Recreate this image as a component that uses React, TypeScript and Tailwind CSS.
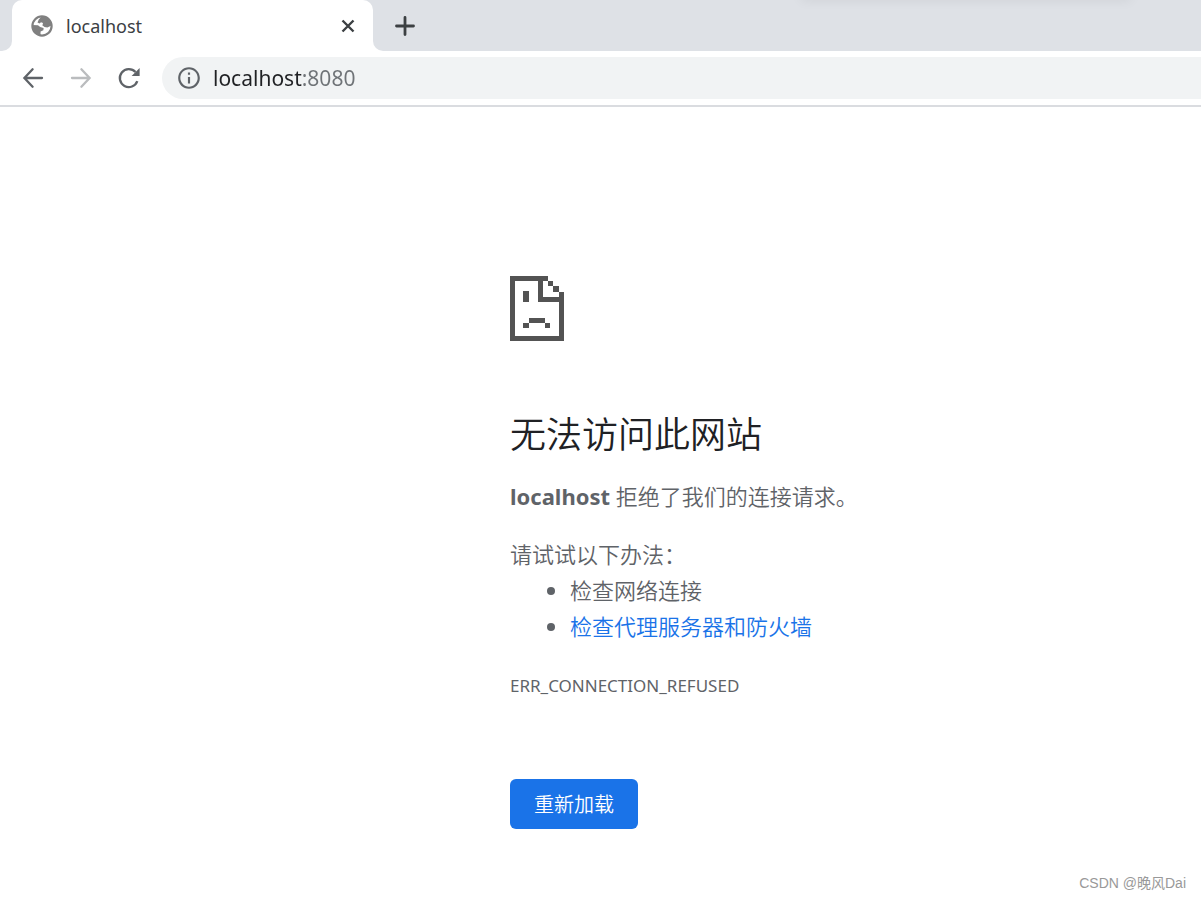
import React, { useState } from 'react';
import { MdInfoOutline } from 'react-icons/md';

const GlobeIcon = () => (
  <svg viewBox="0 0 24 24" className="size-6 shrink-0" aria-hidden="true">
    <circle cx="12" cy="12" r="9.6" fill="none" stroke="#808080" strokeWidth="2.2" />
    <path d="M12 2 8.8 5.6 7.5 8.6 9.5 9.4 11 8.2 13 9 12.4 11.6 14.6 13 17.4 13.6 21.5 11.5A10 10 0 0 0 12 2Z" fill="#808080" />
    <path d="M2.2 11 8 11.2 10.2 13 13.6 14 13.4 16.2 10.6 17.4 10.4 21.6A10 10 0 0 1 2.2 11Z" fill="#808080" />
  </svg>
);

const ArrowLeftIcon = () => (
  <svg viewBox="0 0 30 30" className="size-[30px]" fill="none" stroke="currentColor" strokeWidth="2.3" aria-hidden="true">
    <path d="M24 15H7M14.6 6.3 6.4 15 14.6 23.7" strokeLinecap="round" />
  </svg>
);

const ArrowRightIcon = () => (
  <svg viewBox="0 0 30 30" className="size-[30px]" fill="none" stroke="currentColor" strokeWidth="2.3" aria-hidden="true">
    <path d="M6 15H23M15.4 6.3 23.6 15 15.4 23.7" strokeLinecap="round" />
  </svg>
);

const ReloadIcon = () => (
  <svg viewBox="0 0 30 30" className="size-[30px]" aria-hidden="true">
    <path d="M23.3 18.2A9 9 0 1 1 21.5 9" fill="none" stroke="currentColor" strokeWidth="2.3" />
    <path d="M25.6 5V13H17.6Z" fill="currentColor" />
  </svg>
);

const CloseIcon = () => (
  <svg viewBox="0 0 24 24" className="size-6" aria-hidden="true">
    <path d="M6.5 6.5 17.5 17.5M17.5 6.5 6.5 17.5" stroke="currentColor" strokeWidth="2.4" />
  </svg>
);

const PlusIcon = () => (
  <svg viewBox="0 0 28 28" className="size-7" aria-hidden="true">
    <path d="M14 5.5V22.5M5.5 14H22.5" stroke="currentColor" strokeWidth="2.8" strokeLinecap="round" />
  </svg>
);

const SadPageIcon = () => (
  <svg width="54" height="65" viewBox="0 0 54 65" fill="#535353" shapeRendering="crispEdges" aria-hidden="true">
    {/* page outline */}
    <path d="M0 0H38V5H5V60H49V16H54V65H0Z" />
    {/* folded corner */}
    <path d="M28 0H33V21H54V26H28Z" />
    <path d="M38 5H43V10H38ZM43 10H49V16H43Z" />
    {/* eye and mouth */}
    <path d="M13 15H19V26H13ZM19 42H35V47H19ZM13 47H19V52H13ZM35 47H40V52H35Z" />
  </svg>
);

const TabStrip = () => (
  <div className="relative flex h-[51px] overflow-hidden bg-[#dee1e6]">
    <div className="w-3 bg-white">
      <div className="h-full rounded-br-[10px] bg-[#dee1e6]" />
    </div>
    <div className="bg-[#dee1e6]">
      <div className="flex h-full w-[361px] items-center rounded-t-[10px] bg-white pr-[13px] pl-[18px]">
        <GlobeIcon />
        <span className="ml-3 flex-1 text-lg text-[#3c4043]">localhost</span>
        <button type="button" aria-label="关闭标签页" className="text-[#3c4043]">
          <CloseIcon />
        </button>
      </div>
    </div>
    <div className="flex-1 bg-white">
      <div className="flex h-full items-center rounded-bl-[10px] bg-[#dee1e6] pl-[18px]">
        <button type="button" aria-label="新标签页" className="text-[#3c4043]">
          <PlusIcon />
        </button>
      </div>
    </div>
    {/* soft shadow along the top edge */}
    <div className="absolute -top-2 right-[70px] h-2 w-[330px] shadow-[0_0_12px_rgba(0,0,0,0.08)]" />
  </div>
);

const Toolbar = () => {
  const [url, setUrl] = useState('localhost:8080');

  return (
    <div className="flex h-14 items-center border-b-2 border-[#dadce0] bg-white pl-[18px]">
      <div className="flex gap-[18px] text-[#5f6368]">
        <button type="button" aria-label="后退">
          <ArrowLeftIcon />
        </button>
        <button type="button" aria-label="前进" className="text-[#babcbe]">
          <ArrowRightIcon />
        </button>
        <button type="button" aria-label="重新加载">
          <ReloadIcon />
        </button>
      </div>
      <div className="ml-[18px] flex h-[42px] flex-1 items-center rounded-l-full bg-[#f1f3f4] pl-[14px]">
        <MdInfoOutline className="size-[26px] shrink-0 text-[#5f6368]" />
        {/* host is dark, port is muted */}
        <input
          type="text"
          aria-label="地址"
          value={url}
          onChange={(e) => setUrl(e.target.value)}
          className="ml-[11px] min-w-0 flex-1 bg-linear-to-r from-[#202124] from-[89px] to-[#6f7377] to-[89px] bg-clip-text pt-0.5 text-[21px] text-transparent caret-black outline-none"
        />
      </div>
    </div>
  );
};

const ErrorPage = () => (
  <main className="ml-[510px] pt-[169px] pr-6 pb-[70px] text-[#5f6368]">
    <SadPageIcon />
    <h1 className="mt-[72px] text-4xl leading-[44px] font-[350] text-[#202124]">无法访问此网站</h1>
    <p className="mt-[21px] text-[22px] leading-9 font-[350]">
      <strong className="font-bold">localhost</strong> 拒绝了我们的连接请求。
    </p>
    <div className="mt-[22px] text-[22px] leading-9 font-[350]">
      <p>请试试以下办法：</p>
      <ul className="list-disc pl-[60px]">
        <li>检查网络连接</li>
        <li>
          <a href="#buttons" className="text-[#1a73e8]">
            检查代理服务器和防火墙
          </a>
        </li>
      </ul>
    </div>
    <p className="mt-7 text-[17px] leading-7">ERR_CONNECTION_REFUSED</p>
    <button type="button" className="mt-[79px] h-[50px] rounded-md bg-[#1a73e8] px-6 pt-0.5 text-xl font-[350] text-white">
      重新加载
    </button>
  </main>
);

const App = () => (
  <div className="relative min-h-screen bg-white font-['Noto_Sans','Noto_Sans_CJK_SC',sans-serif]">
    <header>
      <TabStrip />
      <Toolbar />
    </header>
    <ErrorPage />
    <div className="absolute right-[15px] bottom-1.5 font-['Liberation_Sans','Noto_Sans_CJK_SC',sans-serif] text-sm text-[#999999]">
      CSDN @晚风Dai
    </div>
  </div>
);

export default App;
